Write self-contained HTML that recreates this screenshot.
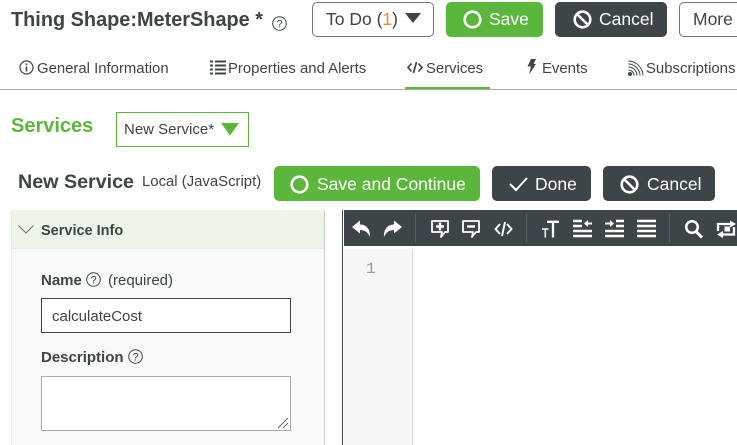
<!DOCTYPE html>
<html><head><meta charset="utf-8">
<style>
html,body{margin:0;padding:0}
body{width:737px;height:445px;overflow:hidden;background:#fff;position:relative;font-family:"Liberation Sans",sans-serif;color:#3d4547}
.a{position:absolute;white-space:nowrap}
.b{position:absolute;box-sizing:border-box;border-radius:5px;color:#fff;font-size:17.5px;line-height:35px;white-space:nowrap}
.g{background:#5bb73b}.d{background:#3d4547}
.w{background:#fff;border:1px solid #777;color:#3d4547}
.b svg,.a svg{position:absolute;overflow:visible}
.t{position:absolute;font-size:14.9px;line-height:18px;top:60px;white-space:nowrap;color:#3d4547}
svg.i{position:absolute}
.r2{line-height:37px}
</style></head><body>

<div class="a" style="left:11px;top:8px;font-size:19.9px;font-weight:bold;line-height:24px">Thing Shape:MeterShape *</div>
<svg class="i" style="left:272px;top:16px" width="15" height="15" viewBox="0 0 15 15"><circle cx="7.500" cy="7.500" r="6.800" fill="none" stroke="#3d4547"/><text x="7.500" y="11.500" font-size="11" text-anchor="middle" fill="#3d4547" font-family="Liberation Sans">?</text></svg>

<div class="b w" style="left:312px;top:2px;width:122px;height:35px;line-height:33px;padding-left:13px">To Do (<span style="color:#e8872b">1</span>)<svg style="left:92px;top:10px" width="16" height="11"><path d="M0 0H16L8 10Z" fill="#3d4547"/></svg></div>
<div class="b g" style="left:446px;top:2px;width:97px;height:35px;padding-left:43px">Save<svg style="left:17px;top:8px" width="19" height="19"><circle cx="9.500" cy="9.500" r="7.800" fill="none" stroke="#fff" stroke-width="2.600"/></svg></div>
<div class="b d" style="left:555px;top:2px;width:112px;height:35px;padding-left:44px">Cancel<svg style="left:18px;top:8px" width="19" height="19"><circle cx="9.500" cy="9.500" r="7.800" fill="none" stroke="#fff" stroke-width="2.600"/><path d="M4 4L15 15" stroke="#fff" stroke-width="2.600"/></svg></div>
<div class="b w" style="left:679px;top:2px;width:80px;height:35px;line-height:33px;padding-left:13px">More</div>

<svg class="i" style="left:19px;top:60px" width="15" height="15" viewBox="0 0 15 15"><circle cx="7.500" cy="7.500" r="6.500" fill="none" stroke="#3d4547" stroke-width="1.200"/><path d="M7.500 6.500V11.500" stroke="#3d4547" stroke-width="1.600"/><rect x="6.700" y="3.400" width="1.600" height="1.800" fill="#3d4547"/></svg>
<div class="t" style="left:37px">General Information</div>
<svg class="i" style="left:210px;top:60px" width="16" height="15"><path d="M0 1.500H3M5 1.500H16M0 5.500H3M5 5.500H16M0 9.500H3M5 9.500H16M0 13.500H3M5 13.500H16" stroke="#3d4547" stroke-width="2" fill="none"/></svg>
<div class="t" style="left:228px">Properties and Alerts</div>
<svg class="i" style="left:407px;top:61px" width="16" height="13"><path d="M4.500 2.500L1 6.500L4.500 10.500M11.500 2.500L15 6.500L11.500 10.500M9.500 1L6.500 12" stroke="#3d4547" stroke-width="1.700" fill="none"/></svg>
<div class="t" style="left:426px">Services</div>
<svg class="i" style="left:526px;top:59px" width="11" height="16"><path d="M5 0H10L7.500 5H10L3 15.500L5 7.500H1.500Z" fill="#3d4547"/></svg>
<div class="t" style="left:542px">Events</div>
<svg class="i" style="left:628px;top:60px" width="16" height="16" fill="none" stroke="#3d4547"><path d="M0.500 1C8 1 15 8 15 15.500M0.500 4C6.500 4 12 9.500 12 15.500M0.500 7C5 7 9 11 9 15.500M0.500 10C3.500 10 6 12.500 6 15.500"/><circle cx="2" cy="14" r="2" fill="#3d4547" stroke="none"/></svg>
<div class="t" style="left:646px">Subscriptions</div>
<div class="a" style="left:0;top:89px;width:737px;height:1px;background:#aaa"></div>
<div class="a" style="left:405px;top:87px;width:85px;height:2px;background:#5bb73b"></div>

<div class="a" style="left:11px;top:114px;font-size:20px;font-weight:bold;line-height:24px;color:#5bb73b">Services</div>
<div class="a" style="left:116px;top:112px;width:133px;height:35px;box-sizing:border-box;border:1px solid #5bb73b;background:#fff">
<span class="a" style="left:7px;top:8px;font-size:15px;line-height:18px">New Service*</span>
<svg style="left:104px;top:10px" width="18" height="13"><path d="M0 0H18L9 12.500Z" fill="#5bb73b"/></svg></div>

<div class="a" style="left:18px;top:170px;font-size:19.700px;font-weight:bold;line-height:24px">New Service</div>
<div class="a" style="left:142px;top:173px;font-size:14.900px;line-height:18px">Local (JavaScript)</div>
<div class="b g r2" style="left:274px;top:166px;width:206px;height:35px;padding-left:43px">Save and Continue<svg style="left:16px;top:9px" width="19" height="19"><circle cx="9.500" cy="9.500" r="7.800" fill="none" stroke="#fff" stroke-width="2.600"/></svg></div>
<div class="b d r2" style="left:492px;top:166px;width:99px;height:35px;padding-left:43px">Done<svg style="left:17px;top:11px" width="19" height="14"><path d="M1 7L7 13L18 1" fill="none" stroke="#fff" stroke-width="2"/></svg></div>
<div class="b d r2" style="left:603px;top:166px;width:112px;height:35px;padding-left:44px">Cancel<svg style="left:17px;top:9px" width="19" height="19"><circle cx="9.500" cy="9.500" r="7.800" fill="none" stroke="#fff" stroke-width="2.600"/><path d="M4 4L15 15" stroke="#fff" stroke-width="2.600"/></svg></div>

<div class="a" style="left:11px;top:210px;width:314px;height:235px;box-sizing:border-box;background:#f9f9f9;border-left:1px solid #e8e8e8;border-right:1px solid #ccc"></div>
<div class="a" style="left:12px;top:210px;width:312px;height:39px;box-sizing:border-box;background:#edf5ea;border-bottom:1px solid #e6eee3"></div>
<svg class="i" style="left:18px;top:225px" width="16" height="9"><path d="M0.500 0.500L8 8L15.500 0.500" fill="none" stroke="#6a7072"/></svg>
<div class="a" style="left:41px;top:222px;font-size:14.500px;font-weight:bold;line-height:18px">Service Info</div>

<div class="a" style="left:41px;top:272px;font-size:15px;font-weight:bold;line-height:18px">Name</div>
<svg class="i" style="left:86px;top:272px" width="15" height="15" viewBox="0 0 15 15"><circle cx="7.500" cy="7.500" r="6.800" fill="none" stroke="#3d4547"/><text x="7.500" y="11.500" font-size="11" text-anchor="middle" fill="#3d4547" font-family="Liberation Sans">?</text></svg>
<div class="a" style="left:108px;top:272px;font-size:15px;line-height:18px">(required)</div>
<div class="a" style="left:41px;top:298px;width:250px;height:35px;box-sizing:border-box;border:1px solid #3d4547;background:#fff"><span class="a" style="left:10px;top:9px;font-size:15px;line-height:18px">calculateCost</span></div>
<div class="a" style="left:41px;top:349px;font-size:15px;font-weight:bold;line-height:18px">Description</div>
<svg class="i" style="left:128px;top:349px" width="15" height="15" viewBox="0 0 15 15"><circle cx="7.500" cy="7.500" r="6.800" fill="none" stroke="#3d4547"/><text x="7.500" y="11.500" font-size="11" text-anchor="middle" fill="#3d4547" font-family="Liberation Sans">?</text></svg>
<div class="a" style="left:41px;top:376px;width:250px;height:55px;box-sizing:border-box;border:1px solid #aaa;background:#fff"></div>
<svg class="i" style="left:278px;top:418px" width="11" height="11"><path d="M0 10L10 0M5 10L10 5" stroke="#666" fill="none"/></svg>

<div class="a" style="left:342px;top:210px;width:1px;height:235px;background:#3d4547"></div>
<div class="a" style="left:344px;top:210px;width:393px;height:36px;background:#3d4547"></div>
<div class="a" style="left:344px;top:249px;width:68px;height:196px;background:#f7f7f7"></div>
<div class="a" style="left:412px;top:249px;width:1px;height:196px;background:#ddd"></div>
<div class="a" style="left:366px;top:260px;font-family:'Liberation Mono',monospace;font-size:16px;line-height:18px;color:#999">1</div>

<svg class="i" style="left:344px;top:210px" width="393" height="36" fill="none" stroke="#fff">
<path d="M71.500 4V32M182.500 4V32M325.500 4V32" stroke="#59625f"/>
<path d="M8 17L16 10.500V14.500C22 14.500 26.500 19 26 27C24 22.500 21 20 16 20V23.500Z" fill="#fff" stroke="none"/>
<path d="M58 17L50 10.500V14.500C44 14.500 39.500 19 40 27C42 22.500 45 20 50 20V23.500Z" fill="#fff" stroke="none"/>
<path d="M88 11H104V22H101L97 27L98 22H88Z" stroke-width="1.800" stroke-linejoin="round"/><path d="M92 16.500H100M96 12.500V20.500" stroke-width="2.400"/>
<path d="M119 11H135V22H132L128 27L129 22H119Z" stroke-width="1.800" stroke-linejoin="round"/><path d="M123 16.500H131" stroke-width="2.400"/>
<path d="M156 14L151.500 19L156 24M163 14L167.500 19L163 24M161 12L158 26" stroke-width="1.900"/>
<path d="M198 19H204.500M201.300 19V27.500" stroke-width="1.500"/><path d="M203 11.800H215M209 11.800V27.500" stroke-width="2.300"/>
<path d="M229 11H238M229 16H238M229 21H248M229 26H248" stroke-width="2.500"/><path d="M248 13.500H242" stroke-width="2"/><path d="M244 10L240 13.500L244 17Z" fill="#fff" stroke="none"/>
<path d="M272 11H280M272 16H280M261 21H280M261 26H280" stroke-width="2.500"/><path d="M261 13.500H267" stroke-width="2"/><path d="M266 10L270 13.500L266 17Z" fill="#fff" stroke="none"/>
<path d="M293 11H312M293 16H312M293 21H312M293 26H312" stroke-width="2.500"/>
<circle cx="348" cy="17" r="5.800" stroke-width="2.500"/><path d="M352 21.500L358 27.500" stroke-width="3"/>
<path d="M374 21V14H387" stroke-width="2.300"/><path d="M390 17V24.500H378" stroke-width="2.300"/><path d="M386 10.500L392 14L386 17.500ZM379 21L373 24.500L379 28Z" fill="#fff" stroke="none"/><rect x="380.500" y="16.500" width="5.500" height="5" stroke="none" fill="#fff"/>
</svg>
</body></html>
